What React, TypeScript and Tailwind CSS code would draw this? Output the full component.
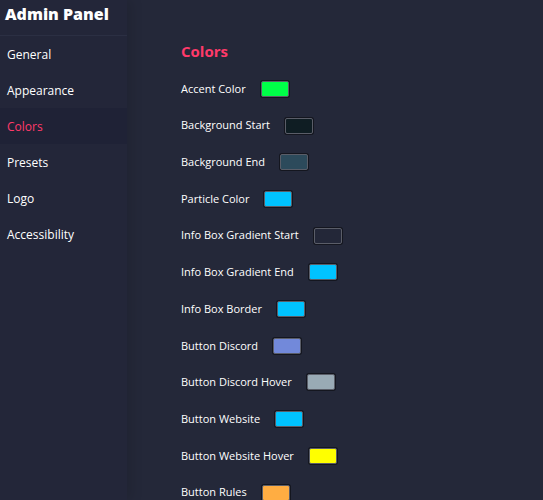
import React, { useState } from "react";

const menu = ["General", "Appearance", "Colors", "Presets", "Logo", "Accessibility"];

const colors = [
  { label: "Accent Color", value: "#00ff48" },
  { label: "Background Start", value: "#0f1d23" },
  { label: "Background End", value: "#2c4a5b" },
  { label: "Particle Color", value: "#00c3ff" },
  { label: "Info Box Gradient Start", value: "#232738" },
  { label: "Info Box Gradient End", value: "#00c3ff" },
  { label: "Info Box Border", value: "#00c3ff" },
  { label: "Button Discord", value: "#7289da" },
  { label: "Button Discord Hover", value: "#99aab5" },
  { label: "Button Website", value: "#00c3ff" },
  { label: "Button Website Hover", value: "#ffff00" },
  { label: "Button Rules", value: "#ffad42" },
];

const App = () => {
  const [active, setActive] = useState("Colors");

  return (
    <div
      className="flex h-[500px] overflow-hidden bg-[#242839] text-white"
      style={{ fontFamily: '"Open Sans", "Liberation Sans", sans-serif' }}
    >
      {/* sidebar */}
      <aside className="w-[127px] shrink-0 bg-[#232639] shadow-[4px_0_12px_rgba(0,0,0,0.12)]">
        <div className="h-[36px] border-b border-[#2b2f43] pl-[5px] pt-[3px] text-[16px] font-extrabold leading-[22px]">
          Admin Panel
        </div>
        <nav className="flex flex-col">
          {menu.map((item) => (
            <button
              key={item}
              onClick={() => setActive(item)}
              className={
                "h-[36px] pl-[7px] pt-[2px] text-left text-[12px] font-medium " +
                (active === item ? "bg-[#1f2236] text-[#ff3a6a]" : "text-white")
              }
            >
              {item}
            </button>
          ))}
        </nav>
      </aside>

      {/* content */}
      <main className="flex-1 pl-[54px] pt-[40px]">
        <h2 className="h-[22px] text-[15px] font-bold leading-[22px] text-[#ff3a6a]">
          Colors
        </h2>
        <div className="mt-[8.6px] flex flex-col">
          {colors.map((c) => (
            <div key={c.label} className="flex h-[36.7px] items-center gap-[15px]">
              <span className="text-[11px] font-medium">{c.label}</span>
              <span
                className="h-[16px] w-[28px] rounded-[2px] border border-[#5a5d68] shadow-[0_0_0_1px_#14161f]"
                style={{ backgroundColor: c.value }}
              />
            </div>
          ))}
        </div>
      </main>
    </div>
  );
};

export default App;
